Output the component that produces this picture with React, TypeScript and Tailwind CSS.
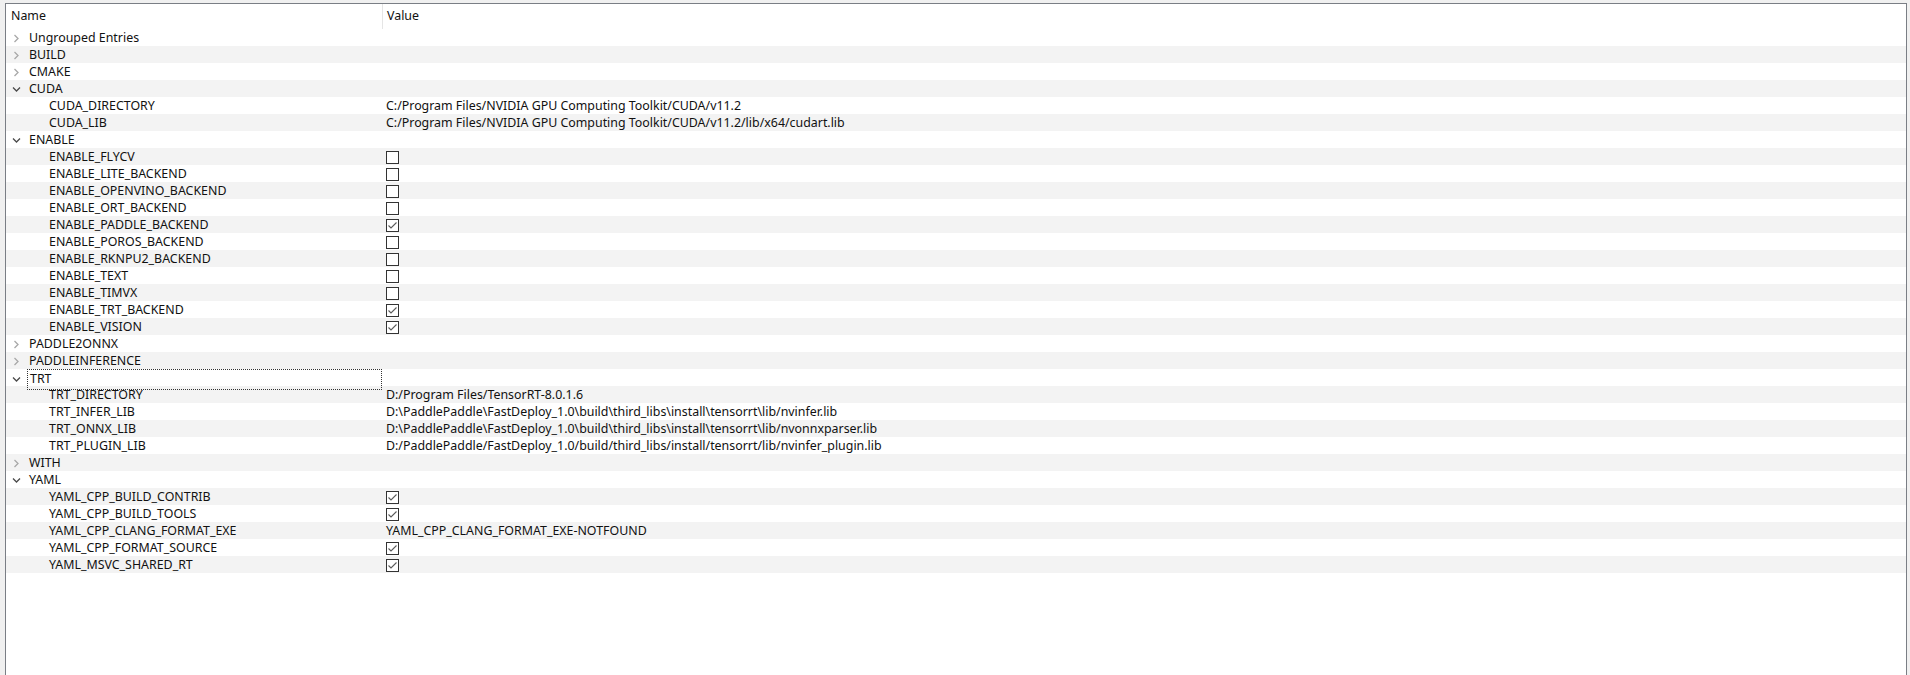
import React from 'react';

type Row =
  | { kind: 'group'; name: string; open: boolean; focused?: boolean }
  | { kind: 'item'; name: string; value?: string; checked?: boolean };

const rows: Row[] = [
  { kind: 'group', name: 'Ungrouped Entries', open: false },
  { kind: 'group', name: 'BUILD', open: false },
  { kind: 'group', name: 'CMAKE', open: false },
  { kind: 'group', name: 'CUDA', open: true },
  { kind: 'item', name: 'CUDA_DIRECTORY', value: 'C:/Program Files/NVIDIA GPU Computing Toolkit/CUDA/v11.2' },
  { kind: 'item', name: 'CUDA_LIB', value: 'C:/Program Files/NVIDIA GPU Computing Toolkit/CUDA/v11.2/lib/x64/cudart.lib' },
  { kind: 'group', name: 'ENABLE', open: true },
  { kind: 'item', name: 'ENABLE_FLYCV', checked: false },
  { kind: 'item', name: 'ENABLE_LITE_BACKEND', checked: false },
  { kind: 'item', name: 'ENABLE_OPENVINO_BACKEND', checked: false },
  { kind: 'item', name: 'ENABLE_ORT_BACKEND', checked: false },
  { kind: 'item', name: 'ENABLE_PADDLE_BACKEND', checked: true },
  { kind: 'item', name: 'ENABLE_POROS_BACKEND', checked: false },
  { kind: 'item', name: 'ENABLE_RKNPU2_BACKEND', checked: false },
  { kind: 'item', name: 'ENABLE_TEXT', checked: false },
  { kind: 'item', name: 'ENABLE_TIMVX', checked: false },
  { kind: 'item', name: 'ENABLE_TRT_BACKEND', checked: true },
  { kind: 'item', name: 'ENABLE_VISION', checked: true },
  { kind: 'group', name: 'PADDLE2ONNX', open: false },
  { kind: 'group', name: 'PADDLEINFERENCE', open: false },
  { kind: 'group', name: 'TRT', open: true, focused: true },
  { kind: 'item', name: 'TRT_DIRECTORY', value: 'D:/Program Files/TensorRT-8.0.1.6' },
  { kind: 'item', name: 'TRT_INFER_LIB', value: 'D:\\PaddlePaddle\\FastDeploy_1.0\\build\\third_libs\\install\\tensorrt\\lib/nvinfer.lib' },
  { kind: 'item', name: 'TRT_ONNX_LIB', value: 'D:\\PaddlePaddle\\FastDeploy_1.0\\build\\third_libs\\install\\tensorrt\\lib/nvonnxparser.lib' },
  { kind: 'item', name: 'TRT_PLUGIN_LIB', value: 'D:/PaddlePaddle/FastDeploy_1.0/build/third_libs/install/tensorrt/lib/nvinfer_plugin.lib' },
  { kind: 'group', name: 'WITH', open: false },
  { kind: 'group', name: 'YAML', open: true },
  { kind: 'item', name: 'YAML_CPP_BUILD_CONTRIB', checked: true },
  { kind: 'item', name: 'YAML_CPP_BUILD_TOOLS', checked: true },
  { kind: 'item', name: 'YAML_CPP_CLANG_FORMAT_EXE', value: 'YAML_CPP_CLANG_FORMAT_EXE-NOTFOUND' },
  { kind: 'item', name: 'YAML_CPP_FORMAT_SOURCE', checked: true },
  { kind: 'item', name: 'YAML_MSVC_SHARED_RT', checked: true },
];

const Chevron = ({ open }: { open: boolean }) =>
  open ? (
    <svg width="9" height="9" viewBox="0 0 9 9" className="shrink-0">
      <path d="M1 2.5 L4.5 6 L8 2.5" fill="none" stroke="#4a4a4a" strokeWidth="1.3" />
    </svg>
  ) : (
    <svg width="9" height="9" viewBox="0 0 9 9" className="shrink-0">
      <path d="M2.5 1 L6 4.5 L2.5 8" fill="none" stroke="#a8a8a8" strokeWidth="1.3" />
    </svg>
  );

const CheckBox = ({ checked }: { checked: boolean }) => (
  <svg width="13" height="13" viewBox="0 0 13 13" className="block">
    <rect x="0.5" y="0.5" width="12" height="12" fill="#fff" stroke="#333" />
    {checked && <path d="M2.5 6.5 L5 9 L10.5 3.5" fill="none" stroke="#5a5a5a" strokeWidth="1.1" />}
  </svg>
);

export default function App() {
  return (
    <div className="w-full h-[675px] bg-[#f0f0f0] pt-[3px] pl-[5px] pr-[3px] overflow-hidden" style={{ fontFamily: '"Noto Sans", "Noto Sans CJK SC", sans-serif' }}>
      <div className="h-[680px] bg-white border border-b-0 border-[#7a7e85] text-[12.4px] text-[#111]">
        {/* header */}
        <div className="grid grid-cols-[376px_1fr] h-[25px] items-center">
          <div className="pl-[5px] leading-none">Name</div>
          <div className="h-full flex items-center border-l border-[#e5e5e5] pl-[4px]">Value</div>
        </div>
        {rows.map((r, i) => (
          <div key={i} className={`grid grid-cols-[376px_1fr] h-[17px] items-center ${i % 2 === 1 ? 'bg-[#f3f3f3]' : 'bg-white'}`}>
            {r.kind === 'group' ? (
              <div className="flex items-center h-full pl-[6px]">
                <Chevron open={r.open} />
                <div className={`ml-[6px] h-full flex items-center pl-[2px] flex-1 ${r.focused ? 'border border-dotted border-[#333] -ml-px' : ''}`}>
                  {r.name}
                </div>
              </div>
            ) : (
              <div className="pl-[43px] whitespace-nowrap">{r.name}</div>
            )}
            <div className="pl-[4px] whitespace-nowrap flex items-center">
              {r.kind === 'item' && r.checked !== undefined ? <CheckBox checked={r.checked} /> : r.kind === 'item' ? r.value : null}
            </div>
          </div>
        ))}
      </div>
    </div>
  );
}
